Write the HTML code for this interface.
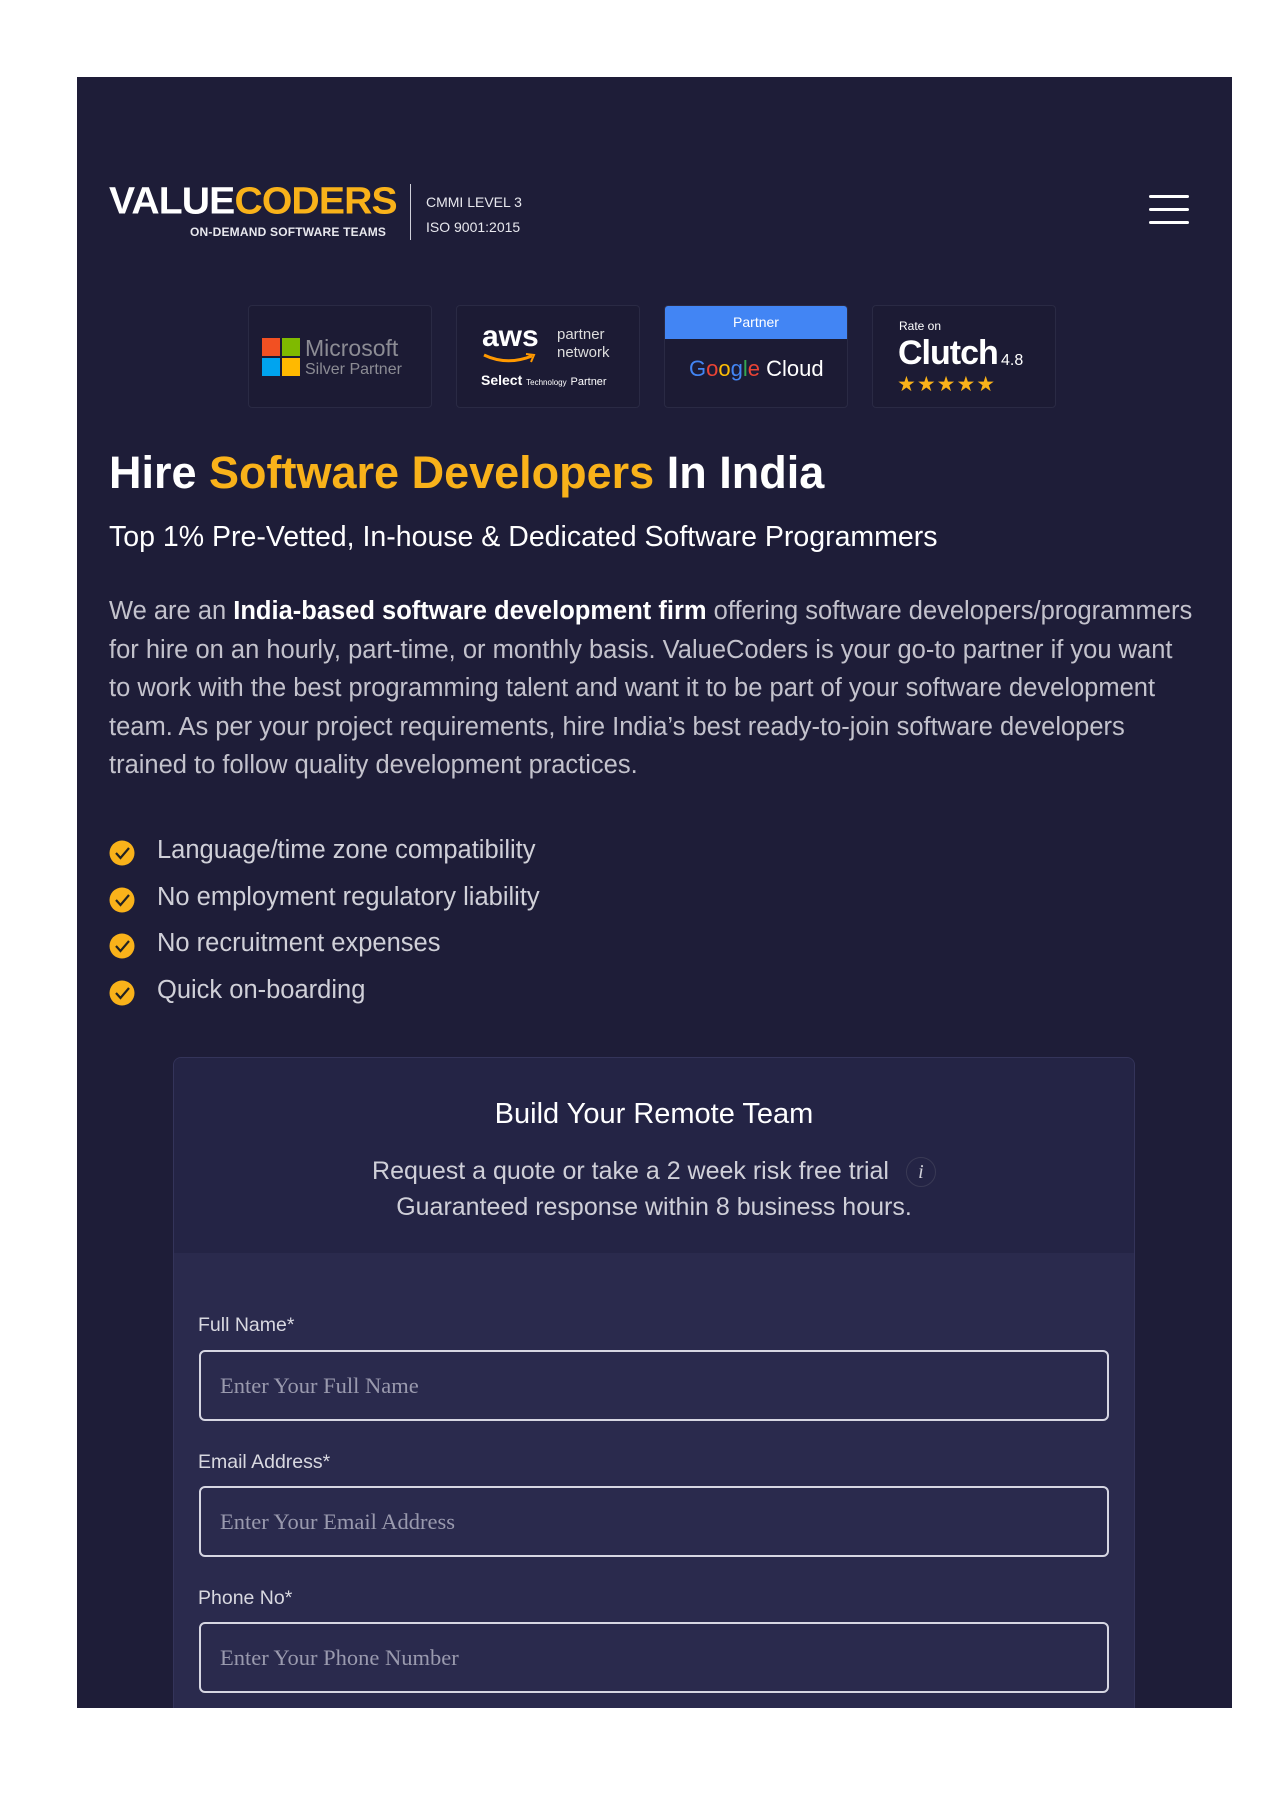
<!DOCTYPE html>
<html><head><meta charset="utf-8"><style>
*{margin:0;padding:0;box-sizing:border-box}
body{width:1272px;height:1800px;background:#fff;font-family:"Liberation Sans",Arial,sans-serif;position:relative;overflow:hidden}
.panel{position:absolute;left:77px;top:77px;width:1155px;height:1631px;background:#1e1d38;overflow:hidden}
.abs{position:absolute}
.badge{position:absolute;top:228px;width:184px;height:103px;border:1px solid #2a2a44;border-radius:4px;background:#1c1b34}
.h1{left:32px;top:370px;font-size:45px;font-weight:bold;color:#fff;white-space:nowrap}
.sub{left:32px;top:444px;font-size:28.5px;color:#fff;white-space:nowrap}
.para{left:32px;top:515px;font-size:25.5px;line-height:38.5px;color:#c3c2cc;white-space:nowrap}
.para b{color:#fff}
.li{position:absolute;left:32px;font-size:25.5px;color:#d0d0d8;white-space:nowrap}
.li svg{position:absolute;left:0;top:3px}
.li span{position:absolute;left:48px;top:-1px}
.card{left:96px;top:980px;width:962px;height:704px;border:1px solid #34345a;border-radius:8px;background:#2a2a4d;overflow:hidden}
.cardh{position:absolute;left:0;top:0;width:100%;height:195px;background:#242445}
.lbl{position:absolute;left:24px;font-size:19.5px;color:#d8d8e0}
.inp{position:absolute;left:25px;width:910px;height:71px;border:2px solid #d6d6e2;border-radius:6px;font-family:"Liberation Serif",serif;font-size:22.5px;color:#9a9aae;padding:21px 0 0 19px}
</style></head><body>
<div class="panel">
 <div class="abs" style="left:32px;top:104px;font-size:45px;font-weight:bold;letter-spacing:-1px;line-height:1;transform:scale(0.87,0.85);transform-origin:top left;white-space:nowrap"><span style="color:#fff">VALUE</span><span style="color:#f9b21a">CODERS</span></div>
 <div class="abs" style="left:113px;top:148px;font-size:12px;font-weight:bold;color:#e8e8ee;letter-spacing:0.2px;white-space:nowrap">ON-DEMAND SOFTWARE TEAMS</div>
 <div class="abs" style="left:333px;top:107px;width:1px;height:56px;background:#cfcfd8"></div>
 <div class="abs" style="left:349px;top:113px;font-size:14px;color:#e8e8ee;line-height:25px">CMMI LEVEL 3<br>ISO 9001:2015</div>
 <div class="abs" style="left:1072px;top:118px;width:40px;height:3px;background:#fff;border-radius:2px"></div>
 <div class="abs" style="left:1072px;top:131px;width:40px;height:3px;background:#fff;border-radius:2px"></div>
 <div class="abs" style="left:1072px;top:144px;width:40px;height:3px;background:#fff;border-radius:2px"></div>

 <div class="badge" style="left:171px">
  <div class="abs" style="left:13px;top:32px;width:18px;height:18px;background:#f25022"></div>
  <div class="abs" style="left:33px;top:32px;width:18px;height:18px;background:#7fba00"></div>
  <div class="abs" style="left:13px;top:52px;width:18px;height:18px;background:#00a4ef"></div>
  <div class="abs" style="left:33px;top:52px;width:18px;height:18px;background:#ffb900"></div>
  <div class="abs" style="left:56px;top:31px;font-size:23px;color:#8c8c94;line-height:1">Microsoft</div>
  <div class="abs" style="left:56px;top:55px;font-size:16px;color:#8c8c94">Silver Partner</div>
 </div>
 <div class="badge" style="left:379px">
  <div class="abs" style="left:25px;top:16px;font-size:30px;font-weight:bold;color:#fff;line-height:1">aws</div>
  <svg class="abs" style="left:25px;top:46px" width="55" height="14"><path d="M2 3 Q25 14 50 4" stroke="#f90" stroke-width="3" fill="none"/><path d="M44 2 L52 3 L49 10" stroke="#f90" stroke-width="2" fill="none"/></svg>
  <div class="abs" style="left:100px;top:20px;font-size:15px;color:#ddd;line-height:18px">partner<br>network</div>
  <div class="abs" style="left:24px;top:66px;font-size:14px;color:#fff;font-weight:bold;white-space:nowrap">Select <span style="font-size:8px;font-weight:normal">Technology</span> <span style="font-size:11px;font-weight:normal">Partner</span></div>
 </div>
 <div class="badge" style="left:587px">
  <div class="abs" style="left:0;top:0;width:100%;height:33px;background:#4285f4;border-radius:3px 3px 0 0;color:#fff;font-size:14px;text-align:center;line-height:33px">Partner</div>
  <div class="abs" style="left:24px;top:50px;font-size:22px;white-space:nowrap"><span style="color:#4285f4">G</span><span style="color:#ea4335">o</span><span style="color:#fbbc05">o</span><span style="color:#4285f4">g</span><span style="color:#34a853">l</span><span style="color:#ea4335">e</span> <span style="color:#fff">Cloud</span></div>
 </div>
 <div class="badge" style="left:795px">
  <div class="abs" style="left:26px;top:13px;font-size:12px;color:#fff">Rate on</div>
  <div class="abs" style="left:25px;top:28px;font-size:34px;color:#fff;font-weight:bold;letter-spacing:-1px">Clutch</div>
  <div class="abs" style="left:128px;top:46px;font-size:16px;color:#fff">4.8</div>
  <div class="abs" style="left:24px;top:66px;font-size:21px;color:#f9b21a;letter-spacing:1px">★★★★★</div>
 </div>

 <div class="abs h1">Hire <span style="color:#f9b21a">Software Developers</span> In India</div>
 <div class="abs sub">Top 1% Pre-Vetted, In-house &amp; Dedicated Software Programmers</div>
 <div class="abs para">We are an <b>India-based software development firm</b> offering software developers/programmers<br>for hire on an hourly, part-time, or monthly basis. ValueCoders is your go-to partner if you want<br>to work with the best programming talent and want it to be part of your software development<br>team. As per your project requirements, hire India’s best ready-to-join software developers<br>trained to follow quality development practices.</div>

 <div class="li" style="top:760px"><svg width="26" height="26"><circle cx="13" cy="13" r="12.5" fill="#f9b21a"/><path d="M7 13 L11.5 18 L20 8" stroke="#222" stroke-width="2.2" fill="none"/></svg><span>Language/time zone compatibility</span></div>
 <div class="li" style="top:807px"><svg width="26" height="26"><circle cx="13" cy="13" r="12.5" fill="#f9b21a"/><path d="M7 13 L11.5 18 L20 8" stroke="#222" stroke-width="2.2" fill="none"/></svg><span>No employment regulatory liability</span></div>
 <div class="li" style="top:853px"><svg width="26" height="26"><circle cx="13" cy="13" r="12.5" fill="#f9b21a"/><path d="M7 13 L11.5 18 L20 8" stroke="#222" stroke-width="2.2" fill="none"/></svg><span>No recruitment expenses</span></div>
 <div class="li" style="top:900px"><svg width="26" height="26"><circle cx="13" cy="13" r="12.5" fill="#f9b21a"/><path d="M7 13 L11.5 18 L20 8" stroke="#222" stroke-width="2.2" fill="none"/></svg><span>Quick on-boarding</span></div>

 <div class="abs card">
  <div class="cardh"></div>
  <div class="abs" style="left:0;top:40px;width:100%;text-align:center;font-size:29px;color:#fff">Build Your Remote Team</div>
  <div class="abs" style="left:0;top:95px;width:100%;text-align:center;font-size:25px;color:#cfcfd8;line-height:36px">Request a quote or take a 2 week risk free trial <span style="display:inline-block;width:30px;height:30px;border:1px solid #3a3a55;border-radius:50%;vertical-align:middle;font-family:'Liberation Serif',serif;font-style:italic;font-size:20px;line-height:28px;margin-left:10px">i</span><br>Guaranteed response within 8 business hours.</div>
  <div class="lbl" style="top:256px">Full Name*</div>
  <div class="inp" style="top:292px">Enter Your Full Name</div>
  <div class="lbl" style="top:393px">Email Address*</div>
  <div class="inp" style="top:428px">Enter Your Email Address</div>
  <div class="lbl" style="top:529px">Phone No*</div>
  <div class="inp" style="top:564px">Enter Your Phone Number</div>
 </div>
</div>
</body></html>
